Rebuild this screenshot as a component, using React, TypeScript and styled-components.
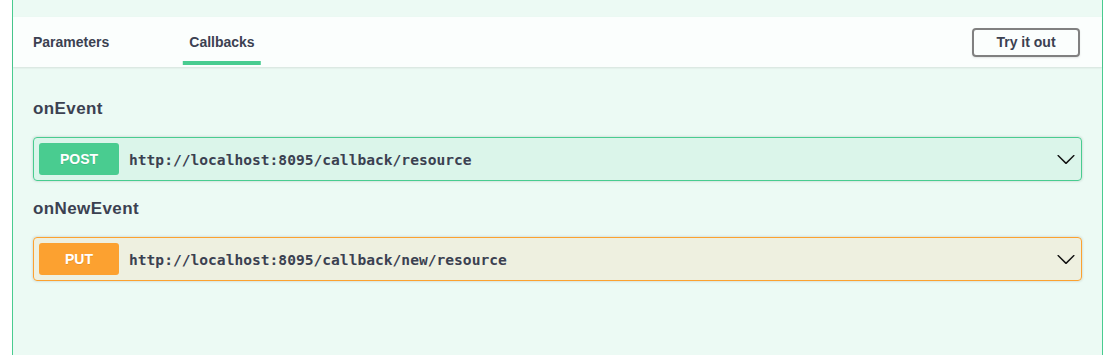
import React from "react";
import styled, { createGlobalStyle, css } from "styled-components";

const GlobalStyle = createGlobalStyle`
  html, body {
    margin: 0;
    padding: 0;
    background: #ffffff;
    overflow: hidden;
  }
  body {
    font-family: "Liberation Sans", Arial, sans-serif;
    color: #3b4151;
  }
`;

const Page = styled.div`
  padding-left: 12px;
  width: 1091px;
`;

const OperationBlock = styled.div`
  box-sizing: border-box;
  border-left: 1px solid #49cc90;
  border-right: 1px solid #49cc90;
  background: rgba(73, 204, 144, 0.1);
  padding-top: 17px;
  min-height: 420px;
`;

const SectionHeader = styled.div`
  box-sizing: border-box;
  display: flex;
  align-items: center;
  min-height: 50px;
  padding: 8px 22px 8px 20px;
  background: rgba(255, 255, 255, 0.8);
  box-shadow: 0 1px 2px rgba(0, 0, 0, 0.1);
`;

const TabList = styled.ul`
  display: flex;
  margin: 0;
  padding: 0;
  list-style: none;
`;

const TabItem = styled.li`
  padding: 0 40px;
  &:first-child {
    padding-left: 0;
  }
`;

const TabLabel = styled.span<{ $active?: boolean }>`
  position: relative;
  display: inline-block;
  font-size: 14px;
  font-weight: 700;
  line-height: 16px;
  color: #3b4151;
  ${(p) =>
    p.$active &&
    css`
      &::after {
        content: "";
        position: absolute;
        left: 50%;
        bottom: -15px;
        width: 120%;
        height: 4px;
        transform: translateX(-50%);
        background: #49cc90;
      }
    `}
`;

const TryButton = styled.button`
  margin-left: auto;
  box-sizing: border-box;
  width: 108px;
  height: 29px;
  padding: 0;
  font-family: "Liberation Sans", Arial, sans-serif;
  font-size: 14px;
  font-weight: 700;
  color: #3b4151;
  background: transparent;
  border: 2px solid #808080;
  border-radius: 4px;
  box-shadow: 0 1px 2px rgba(0, 0, 0, 0.1);
`;

const CallbacksBody = styled.div`
  padding: 32px 20px 0;
`;

const CallbackName = styled.h4`
  margin: 0 0 18px;
  font-family: "Liberation Sans", Arial, sans-serif;
  font-size: 17px;
  font-weight: 700;
  letter-spacing: 0.4px;
  line-height: 20px;
  color: #3b4151;
`;

const methodColors: Record<string, string> = {
  POST: "#49cc90",
  PUT: "#fca130",
};

const methodBg: Record<string, string> = {
  POST: "rgba(73, 204, 144, 0.1)",
  PUT: "rgba(252, 161, 48, 0.1)",
};

const Opblock = styled.div<{ $method: string }>`
  margin-bottom: 18px;
  border: 1px solid ${(p) => methodColors[p.$method]};
  border-radius: 4px;
  background: ${(p) => methodBg[p.$method]};
  box-shadow: 0 0 3px rgba(0, 0, 0, 0.19);
`;

const Summary = styled.div`
  display: flex;
  align-items: center;
  padding: 5px;
`;

const MethodBadge = styled.span<{ $method: string }>`
  min-width: 80px;
  padding: 6px 0;
  font-size: 14px;
  font-weight: 700;
  line-height: 20px;
  text-align: center;
  color: #ffffff;
  border-radius: 3px;
  background: ${(p) => methodColors[p.$method]};
  text-shadow: 0 1px 0 rgba(0, 0, 0, 0.1);
`;

const PathText = styled.span`
  padding: 0 10px;
  font-family: "DejaVu Sans Mono", "Liberation Mono", monospace;
  font-size: 14.6px;
  font-weight: 700;
  color: #3b4151;
`;

const Arrow = styled.svg`
  margin-left: auto;
  width: 20px;
  height: 20px;
  flex-shrink: 0;
  fill: #111111;
`;

const callbacks = [
  { name: "onEvent", method: "POST", path: "http://localhost:8095/callback/resource" },
  { name: "onNewEvent", method: "PUT", path: "http://localhost:8095/callback/new/resource" },
];

export default function App() {
  return (
    <>
      <GlobalStyle />
      <Page>
        <OperationBlock>
          <SectionHeader>
            <TabList>
              <TabItem>
                <TabLabel>Parameters</TabLabel>
              </TabItem>
              <TabItem>
                <TabLabel $active>Callbacks</TabLabel>
              </TabItem>
            </TabList>
            <TryButton>Try it out</TryButton>
          </SectionHeader>
          <CallbacksBody>
            {callbacks.map((cb) => (
              <div key={cb.name}>
                <CallbackName>{cb.name}</CallbackName>
                <Opblock $method={cb.method}>
                  <Summary>
                    <MethodBadge $method={cb.method}>{cb.method}</MethodBadge>
                    <PathText>{cb.path}</PathText>
                    <Arrow viewBox="0 0 20 20" aria-hidden="true">
                      <path d="M17.418 6.109c.272-.268.709-.268.979 0s.271.701 0 .969l-7.908 7.83c-.27.268-.707.268-.979 0l-7.908-7.83c-.27-.268-.27-.701 0-.969.271-.268.709-.268.979 0L10 13.25l7.418-7.141z" />
                    </Arrow>
                  </Summary>
                </Opblock>
              </div>
            ))}
          </CallbacksBody>
        </OperationBlock>
      </Page>
    </>
  );
}
